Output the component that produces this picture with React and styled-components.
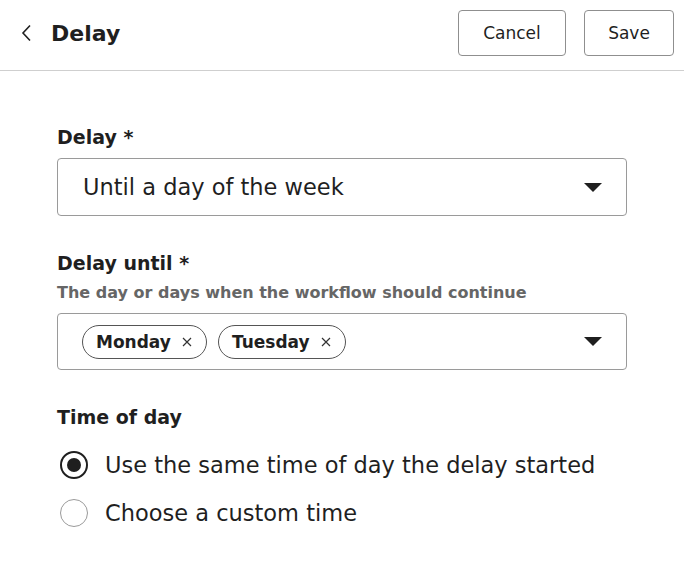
import React, {useState} from 'react';
import styled, {createGlobalStyle} from 'styled-components';

const GlobalStyle = createGlobalStyle`
    body {
        margin: 0;
        background: #ffffff;
        font-family: "DejaVu Sans", "Noto Sans", sans-serif;
        color: #1f1f1f;
    }
`;

const Header = styled.header`
    height: 71px;
    box-sizing: border-box;
    display: flex;
    align-items: center;
    justify-content: space-between;
    padding: 0 10px 4px 20px;
    border-bottom: 1px solid #cfcfcf;
`;

const TitleGroup = styled.div`
    display: flex;
    align-items: center;
    gap: 17px;
`;

const BackButton = styled.button`
    border: none;
    background: none;
    padding: 0;
    display: flex;
    cursor: pointer;
    color: #1f1f1f;
`;

const Title = styled.h1`
    margin: 0;
    font-size: 22px;
    font-weight: 700;
`;

const Actions = styled.div`
    display: flex;
    gap: 18px;
`;

const Button = styled.button`
    height: 46px;
    width: ${props => props.w}px;
    padding: 0;
    border: 1px solid #8f8f8f;
    border-radius: 4px;
    background: #ffffff;
    font-family: inherit;
    font-size: 17px;
    color: #1f1f1f;
    cursor: pointer;
`;

const Form = styled.main`
    width: 570px;
    padding: 54px 57px;
`;

const Field = styled.section`
    margin-bottom: ${props => props.gap}px;
`;

const Label = styled.div`
    font-size: 19px;
    font-weight: 700;
    line-height: 24px;
`;

const Helper = styled.div`
    margin-top: 8px;
    font-size: 16px;
    font-weight: 700;
    line-height: 20px;
    color: #666666;
`;

const SelectBox = styled.div`
    margin-top: ${props => props.top}px;
    height: ${props => props.h}px;
    box-sizing: border-box;
    border: 1px solid #9a9a9a;
    border-radius: 4px;
    display: flex;
    align-items: center;
    padding: 0 24px 0 ${props => props.left}px;
    gap: 8px;
`;

const Value = styled.span`
    flex: 1;
    font-size: 22.5px;
`;

const Chips = styled.div`
    flex: 1;
    display: flex;
    gap: 11px;
`;

const Chip = styled.span`
    height: 34px;
    box-sizing: border-box;
    border: 1px solid #555555;
    border-radius: 17px;
    display: inline-flex;
    align-items: center;
    gap: 11px;
    padding: 0 14px 0 13px;
    font-size: 17px;
    font-weight: 700;
`;

const Remove = styled.span`
    display: flex;
    color: #333333;
`;

const Caret = styled.span`
    width: 0;
    height: 0;
    border-left: 9px solid transparent;
    border-right: 9px solid transparent;
    border-top: 9px solid #1f1f1f;
`;

const RadioList = styled.div`
    margin-top: 22px;
    display: flex;
    flex-direction: column;
    gap: 20px;
`;

const RadioRow = styled.label`
    display: flex;
    align-items: center;
    gap: 17px;
    font-size: 22.5px;
    line-height: 28px;
    cursor: pointer;
`;

const RadioDot = styled.span`
    width: 28px;
    height: 28px;
    box-sizing: border-box;
    border-radius: 50%;
    border: ${props => props.on ? '2px solid #1f1f1f' : '1.5px solid #9a9a9a'};
    display: flex;
    align-items: center;
    justify-content: center;
    margin-left: 3px;

    &::after {
        content: '';
        width: 14px;
        height: 14px;
        border-radius: 50%;
        background: ${props => props.on ? '#1f1f1f' : 'transparent'};
    }
`;

function CloseIcon() {
    return (
        <svg width="10" height="10" viewBox="0 0 10 10">
            <path d="M1 1 L9 9 M9 1 L1 9" stroke="currentColor" strokeWidth="1.2" fill="none" />
        </svg>
    );
}

const options = [
    {id: 'same', label: 'Use the same time of day the delay started'},
    {id: 'custom', label: 'Choose a custom time'},
];

export default function App() {
    const [days, setDays] = useState(['Monday', 'Tuesday']);
    const [time, setTime] = useState('same');

    return (
        <>
            <GlobalStyle />
            <Header>
                <TitleGroup>
                    <BackButton aria-label="Back">
                        <svg width="14" height="18" viewBox="0 0 14 18">
                            <path d="M10 1.5 L3 9 L10 16.5" stroke="currentColor" strokeWidth="1.6" fill="none" />
                        </svg>
                    </BackButton>
                    <Title>Delay</Title>
                </TitleGroup>
                <Actions>
                    <Button w={108}>Cancel</Button>
                    <Button w={90}>Save</Button>
                </Actions>
            </Header>

            <Form>
                <Field gap={35}>
                    <Label>Delay *</Label>
                    <SelectBox top={9} h={58} left={25}>
                        <Value>Until a day of the week</Value>
                        <Caret />
                    </SelectBox>
                </Field>

                <Field gap={35}>
                    <Label>Delay until *</Label>
                    <Helper>The day or days when the workflow should continue</Helper>
                    <SelectBox top={10} h={57} left={24}>
                        <Chips>
                            {days.map(day => (
                                <Chip key={day}>
                                    {day}
                                    <Remove onClick={() => setDays(days.filter(d => d !== day))}>
                                        <CloseIcon />
                                    </Remove>
                                </Chip>
                            ))}
                        </Chips>
                        <Caret />
                    </SelectBox>
                </Field>

                <Field gap={0}>
                    <Label>Time of day</Label>
                    <RadioList>
                        {options.map(opt => (
                            <RadioRow key={opt.id} onClick={() => setTime(opt.id)}>
                                <RadioDot on={time === opt.id} />
                                {opt.label}
                            </RadioRow>
                        ))}
                    </RadioList>
                </Field>
            </Form>
        </>
    );
}
